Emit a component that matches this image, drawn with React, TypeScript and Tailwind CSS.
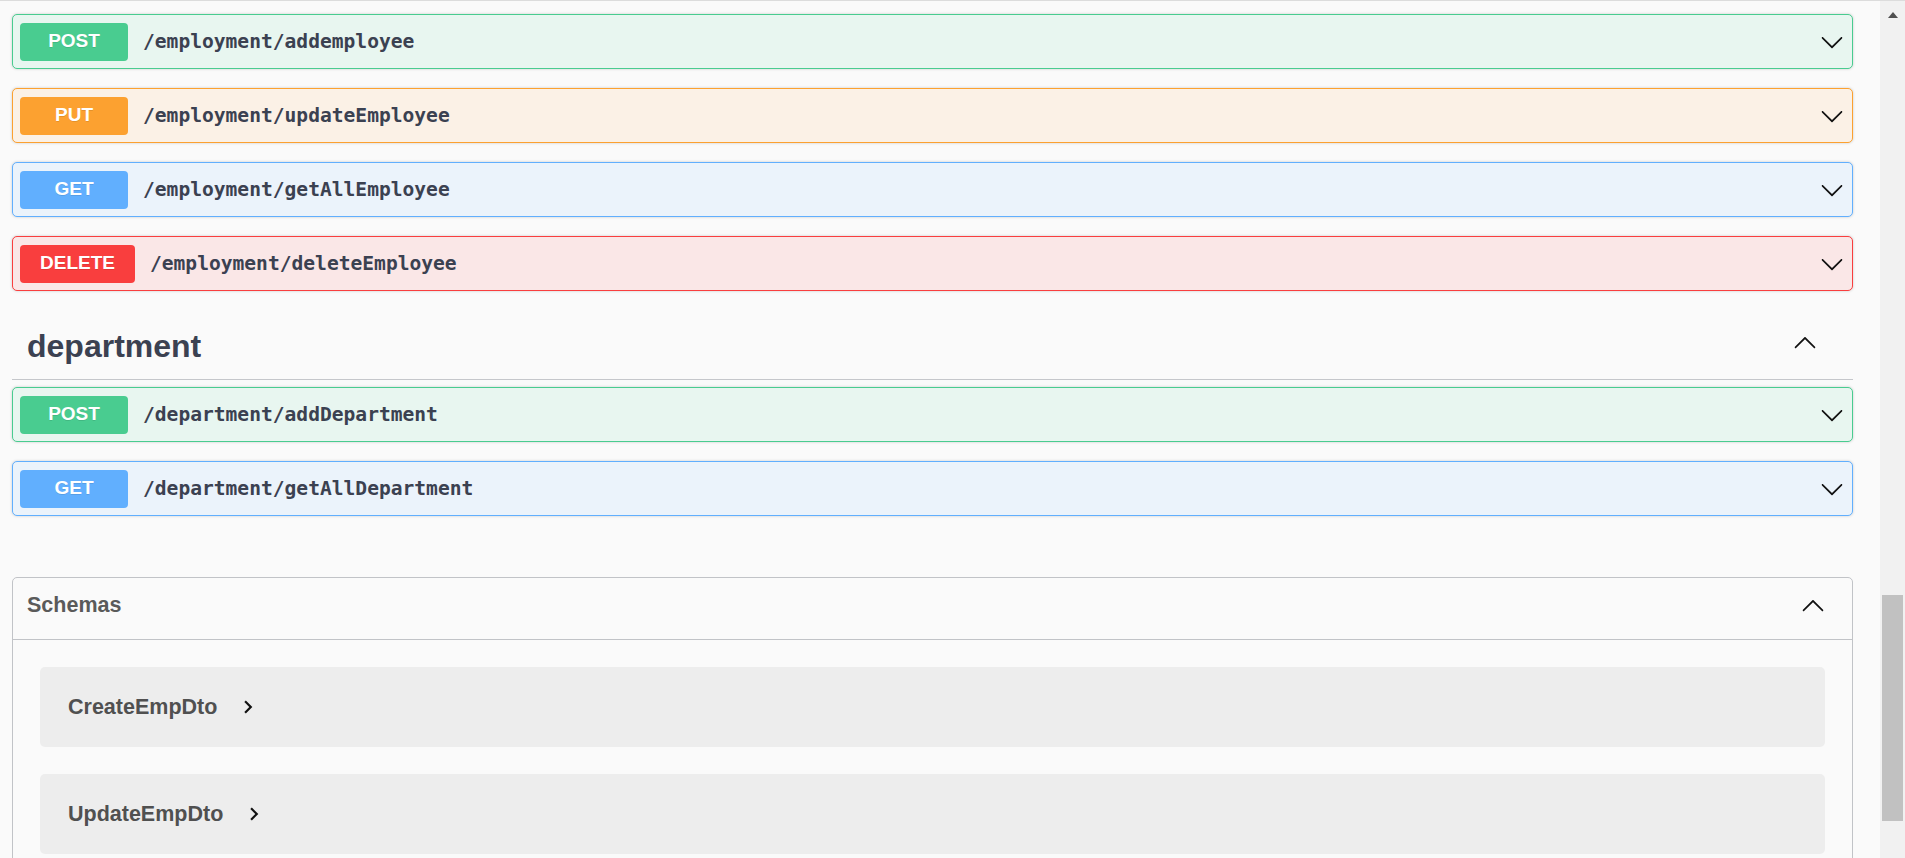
const ops = [
  { method: 'POST', path: '/employment/addemployee' },
  { method: 'PUT', path: '/employment/updateEmployee' },
  { method: 'GET', path: '/employment/getAllEmployee' },
  { method: 'DELETE', path: '/employment/deleteEmployee' },
]

const deptOps = [
  { method: 'POST', path: '/department/addDepartment' },
  { method: 'GET', path: '/department/getAllDepartment' },
]

const styles: Record<string, { block: string; badge: string }> = {
  POST: { block: 'border-[#49cc90] bg-[#e8f6f0]', badge: 'bg-[#49cc90]' },
  PUT: { block: 'border-[#fca130] bg-[#fbf1e6]', badge: 'bg-[#fca130]' },
  GET: { block: 'border-[#61affe] bg-[#ebf3fb]', badge: 'bg-[#61affe]' },
  DELETE: { block: 'border-[#f93e3e] bg-[#fae7e7]', badge: 'bg-[#f93e3e]' },
}

function ChevronDown() {
  return (
    <svg width="24" height="24" viewBox="0 0 20 20" className="shrink-0" fill="#111">
      <path d="M17.418 6.109c.272-.268.709-.268.979 0s.271.701 0 .969l-7.908 7.83c-.27.268-.707.268-.979 0l-7.908-7.83c-.27-.268-.27-.701 0-.969.271-.268.709-.268.979 0L10 13.25l7.418-7.141z" />
    </svg>
  )
}

function ChevronUp() {
  return (
    <svg width="24" height="24" viewBox="0 0 20 20" className="shrink-0" fill="#111">
      <path d="M17.418 14.908c.272.268.709.268.979 0s.271-.701 0-.969l-7.908-7.83c-.27-.268-.707-.268-.979 0l-7.908 7.83c-.27.268-.27.701 0 .969.271.268.709.268.979 0L10 7.767l7.418 7.141z" />
    </svg>
  )
}

function ChevronRight() {
  return (
    <svg width="26" height="26" viewBox="0 0 24 24" className="ml-[18px] shrink-0" fill="#111">
      <path d="M10 6L8.59 7.41 13.17 12l-4.58 4.59L10 18l6-6z" />
    </svg>
  )
}

function OpBlock({ method, path }: { method: string; path: string }) {
  const s = styles[method]
  return (
    <div
      className={`mb-[19px] flex h-[55px] items-center rounded-[5px] border pl-[7px] pr-[8px] shadow-[0_0_3px_rgba(0,0,0,0.19)] ${s.block}`}
    >
      <span
        className={`flex h-[38px] min-w-[108px] items-center justify-center rounded-[4px] px-[20px] font-['Liberation_Sans',Arial,sans-serif] text-[19px] font-bold text-white [text-shadow:0_1px_0_rgba(0,0,0,0.1)] ${s.badge}`}
      >
        {method}
      </span>
      <span className="ml-[15px] flex-1 font-['DejaVu_Sans_Mono',monospace] text-[19.6px] font-bold text-[#3b4151]">
        {path}
      </span>
      <ChevronDown />
    </div>
  )
}

export default function App() {
  return (
    <div className="flex h-[858px] w-[1905px] overflow-hidden border-t border-[#dcdcdc] bg-[#fafafa]">
      <main className="h-full flex-1 pl-[12px] pr-[27px] pt-[13px]">
        {ops.map((op) => (
          <OpBlock key={op.path} {...op} />
        ))}

        <div className="-mt-[19px] flex items-start justify-between border-b border-[#c5c7cb] pb-[17px] pl-[15px] pr-[36px] pt-[39px]">
          <h2 className="h-[32px] font-['Liberation_Sans',Arial,sans-serif] text-[32px] font-bold leading-[32px] text-[#3b4151]">
            department
          </h2>
          <ChevronUp />
        </div>

        <div className="mt-[7px]">
          {deptOps.map((op) => (
            <OpBlock key={op.path} {...op} />
          ))}
        </div>

        <section className="mt-[61px] rounded-[5px] border border-[#c1c3c7]">
          <div className="flex h-[62px] items-center justify-between border-b border-[#c1c3c7] pb-[7px] pl-[14px] pr-[27px]">
            <h4 className="font-['Liberation_Sans',Arial,sans-serif] text-[21.5px] font-bold text-[#5a5a5a]">Schemas</h4>
            <ChevronUp />
          </div>
          <div className="flex flex-col gap-[27px] px-[27px] pb-[60px] pt-[27px]">
            {['CreateEmpDto', 'UpdateEmpDto'].map((name) => (
              <div key={name} className="flex h-[80px] items-center rounded-[5px] bg-[#ededed] pl-[28px]">
                <span className="font-['Liberation_Sans',Arial,sans-serif] text-[21.5px] font-bold text-[#505050]">{name}</span>
                <ChevronRight />
              </div>
            ))}
          </div>
        </section>
      </main>

      <div className="flex h-full w-[25px] shrink-0 flex-col items-center bg-[#f1f1f1]">
        <div className="mt-[11px] h-0 w-0 border-x-[5.5px] border-b-[6px] border-x-transparent border-b-[#505050]" />
        <div className="mt-[577px] h-[226px] w-[21px] bg-[#c1c1c1]" />
      </div>
    </div>
  )
}
